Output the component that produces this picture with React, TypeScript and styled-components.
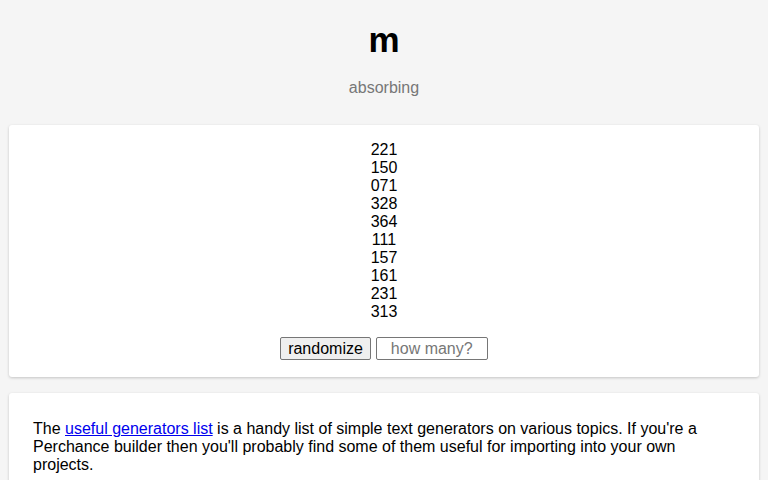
import React, { useState } from 'react';
import styled, { createGlobalStyle } from 'styled-components';

const GlobalStyle = createGlobalStyle`
  html, body {
    margin: 0;
    padding: 0;
    background: #f5f5f5;
    font-family: "Liberation Sans", Arial, sans-serif;
    font-size: 16px;
    color: #000;
  }
`;

const Page = styled.div`
  padding: 0 9px;
`;

const Header = styled.header`
  display: flex;
  flex-direction: column;
  align-items: center;
  padding-top: 19px;
  height: 106px;
  box-sizing: border-box;
  height: 125px;
`;

const Title = styled.h1`
  margin: 0;
  font-size: 35px;
  font-weight: bold;
  line-height: 42px;
`;

const Subtitle = styled.div`
  margin-top: 18px;
  color: #777;
  line-height: 18px;
`;

const Card = styled.section<{ $pad: string }>`
  background: #fff;
  border-radius: 3px;
  box-shadow: 0 1px 3px rgba(0, 0, 0, 0.2);
  padding: ${(p) => p.$pad};
  margin-bottom: 16px;
`;

const Output = styled.div`
  text-align: center;
  line-height: 18px;
`;

const Controls = styled.div`
  display: flex;
  justify-content: center;
  gap: 5px;
  margin-top: 16px;
`;

const Button = styled.button`
  font-family: inherit;
  font-size: 16px;
  height: 23px;
  padding: 0 7px;
  background: #efefef;
  border: 1px solid #767676;
  border-radius: 2px;
  color: #000;
`;

const CountInput = styled.input`
  font-family: inherit;
  font-size: 16px;
  height: 23px;
  width: 112px;
  box-sizing: border-box;
  padding: 0 14px;
  border: 1px solid #767676;
  border-radius: 2px;
  &::placeholder {
    color: #777;
  }
`;

const Text = styled.p`
  margin: 0;
  line-height: 18px;
  a {
    color: #0000ee;
  }
`;

const numbers = ['221', '150', '071', '328', '364', '111', '157', '161', '231', '313'];

export default function App() {
  const [count, setCount] = useState('');
  return (
    <Page>
      <GlobalStyle />
      <Header>
        <Title>m</Title>
        <Subtitle>absorbing</Subtitle>
      </Header>
      <Card $pad="16px 16px 17px">
        <Output>
          {numbers.map((n, i) => (
            <div key={i}>{n}</div>
          ))}
        </Output>
        <Controls>
          <Button>randomize</Button>
          <CountInput
            placeholder="how many?"
            value={count}
            onChange={(e) => setCount(e.target.value)}
          />
        </Controls>
      </Card>
      <Card $pad="27px 24px">
        <Text>
          The <a href="#">useful generators list</a> is a handy list of simple text generators on
          various topics. If you're a Perchance builder then you'll probably find some of them
          useful for importing into your own projects.
        </Text>
      </Card>
    </Page>
  );
}
